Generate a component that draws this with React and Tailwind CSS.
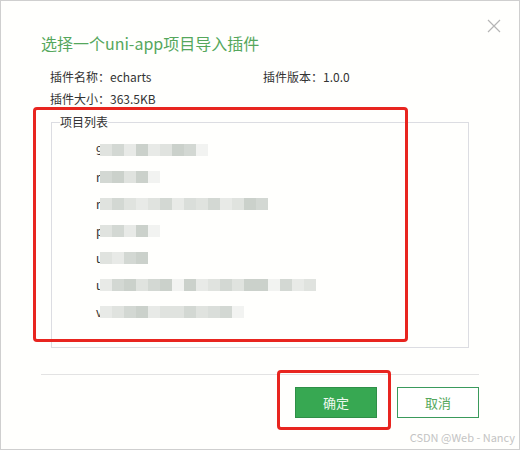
import React from 'react'

const shades = ['bg-[#d3d8d3]', 'bg-[#e0e3df]', 'bg-[#cbd1cb]', 'bg-[#e8eae7]', 'bg-[#f2f3f1]', 'bg-[#dadeda]']

const rows = [
  { ch: '9', cells: [1, 0, 3, 2, 3, 1, 2, 0, 4] },
  { ch: 'r', cells: [0, 2, 1, 2, 4] },
  { ch: 'r', cells: [1, 0, 1, 3, 1, 0, 3, 5, 1, 0, 3, 1, 2, 0] },
  { ch: 'p', cells: [1, 0, 3, 2, 4] },
  { ch: 'u', cells: [1, 3, 0, 2] },
  { ch: 'u', cells: [3, 0, 2, 1, 0, 2, 4, 2, 3, 1, 0, 1, 2, 2, 4, 0, 3, 1] },
  { ch: 'v', cells: [3, 1, 0, 2, 3, 1, 1, 0, 1, 5, 0, 4] },
]

function BlurRow({ ch, cells }) {
  return (
    <div className="flex items-center h-[27px]">
      <span className="w-[6px] text-[12px] text-[#333]">{ch}</span>
      <div className="flex -ml-[2px]">
        {cells.map((c, i) => (
          <div key={i} className={'w-[12px] h-[12px] ' + shades[c]} />
        ))}
      </div>
    </div>
  )
}

export default function App() {
  return (
    <div
      className="relative w-[520px] h-[450px] border border-[#cfcfcf] bg-[#fffffd] text-[#333]"
      style={{ fontFamily: '"Noto Sans CJK SC", "Noto Sans", sans-serif' }}
    >
      {/* close */}
      <button className="absolute right-[18px] top-[18px] w-[14px] h-[14px]">
        <svg width="14" height="14" viewBox="0 0 14 14">
          <path d="M1 1 L13 13 M13 1 L1 13" stroke="#b5b5b5" strokeWidth="1.2" />
        </svg>
      </button>

      <div className="pl-[40px] pr-[40px]">
        <h3 className="pt-[32px] text-[16px] leading-[20px] text-[#55a75c] font-normal">
          选择一个uni-app项目导入插件
        </h3>

        {/* info */}
        <div className="mt-[13px] ml-[9px] grid grid-cols-[213px_1fr] text-[12px] leading-[22px]">
          <div>插件名称：echarts</div>
          <div>插件版本：1.0.0</div>
          <div>插件大小：363.5KB</div>
        </div>

        {/* project list */}
        <fieldset className="mt-[4px] ml-[10px] w-[418px] h-[234px] border border-[#dcdde2] px-[8px]">
          <legend className="text-[12px] leading-[16px]">项目列表</legend>
          <div className="pl-[36px] pt-[6px]">
            {rows.map((r, i) => (
              <BlurRow key={i} {...r} />
            ))}
          </div>
        </fieldset>

        {/* footer */}
        <div className="mt-[26px] w-[438px] border-t border-[#e3e3e3] flex justify-end gap-[20px] pt-[12px]">
          <button className="w-[82px] h-[31px] bg-[#37a852] border border-[#2f8f47] text-[#eef8ef] text-[13px]">
            确定
          </button>
          <button className="w-[82px] h-[31px] bg-white border border-[#3a9a5c] text-[#55a75c] text-[13px]">
            取消
          </button>
        </div>
      </div>

      {/* annotation boxes */}
      <div className="absolute left-[32px] top-[106px] w-[375px] h-[235px] border-[3px] border-[#e8251f] rounded-[4px] pointer-events-none" />
      <div className="absolute left-[276px] top-[369px] w-[114px] h-[60px] border-[3px] border-[#e8251f] rounded-[4px] pointer-events-none" />

      {/* watermark */}
      <div className="absolute right-[4px] bottom-[4px] text-[11px] text-[#c4c4c4]">CSDN @Web - Nancy</div>
    </div>
  )
}
